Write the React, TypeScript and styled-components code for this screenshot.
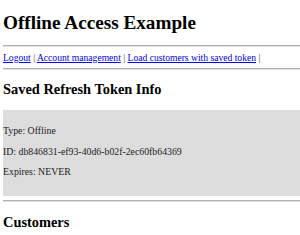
import React from 'react';
import styled, { createGlobalStyle } from 'styled-components';

const GlobalStyle = createGlobalStyle`
  html, body {
    margin: 0;
    padding: 0;
    background: #ffffff;
  }
  body {
    font-family: "Liberation Serif", "Times New Roman", serif;
    font-size: 9.6px;
    color: #000000;
  }
`;

const Page = styled.div`
  padding: 0 0 0 3px;
  display: flow-root;
`;

const Title = styled.h1`
  font-size: 19.2px;
  font-weight: bold;
  margin: 12px 0 11px;
`;

const Rule = styled.hr`
  margin: 4.8px 0;
  border: 0;
  border-top: 1px solid #b0b0b0;
  border-bottom: 1px solid #e2e2e2;
`;

const Menu = styled.div`
  margin: 0;
`;

const MenuLink = styled.a`
  color: #0000ee;
  text-decoration: underline;
`;

const Sep = styled.span`
  color: #444444;
`;

const Heading = styled.h2`
  font-size: 14.4px;
  font-weight: bold;
  margin: 11.5px 0 12px;
`;

const InfoBox = styled.div`
  background: #dddddd;
  padding: 6px 0 9px;
  display: flow-root;
`;

const InfoLine = styled.p`
  margin: 9.4px 0;
  font-size: 9.8px;
  color: #222222;
`;

const links = ['Logout', 'Account management', 'Load customers with saved token'];

export default function App() {
  return (
    <>
      <GlobalStyle />
      <Page>
        <Title>Offline Access Example</Title>
        <Rule />
        <Menu>
          {links.map((l) => (
            <React.Fragment key={l}>
              <MenuLink href="#">{l}</MenuLink> <Sep>|</Sep>{' '}
            </React.Fragment>
          ))}
        </Menu>
        <Rule />
        <Heading>Saved Refresh Token Info</Heading>
        <InfoBox>
          <InfoLine>Type: Offline</InfoLine>
          <InfoLine>ID: db846831-ef93-40d6-b02f-2ec60fb64369</InfoLine>
          <InfoLine>Expires: NEVER</InfoLine>
        </InfoBox>
        <Rule />
        <Heading>Customers</Heading>
      </Page>
    </>
  );
}
